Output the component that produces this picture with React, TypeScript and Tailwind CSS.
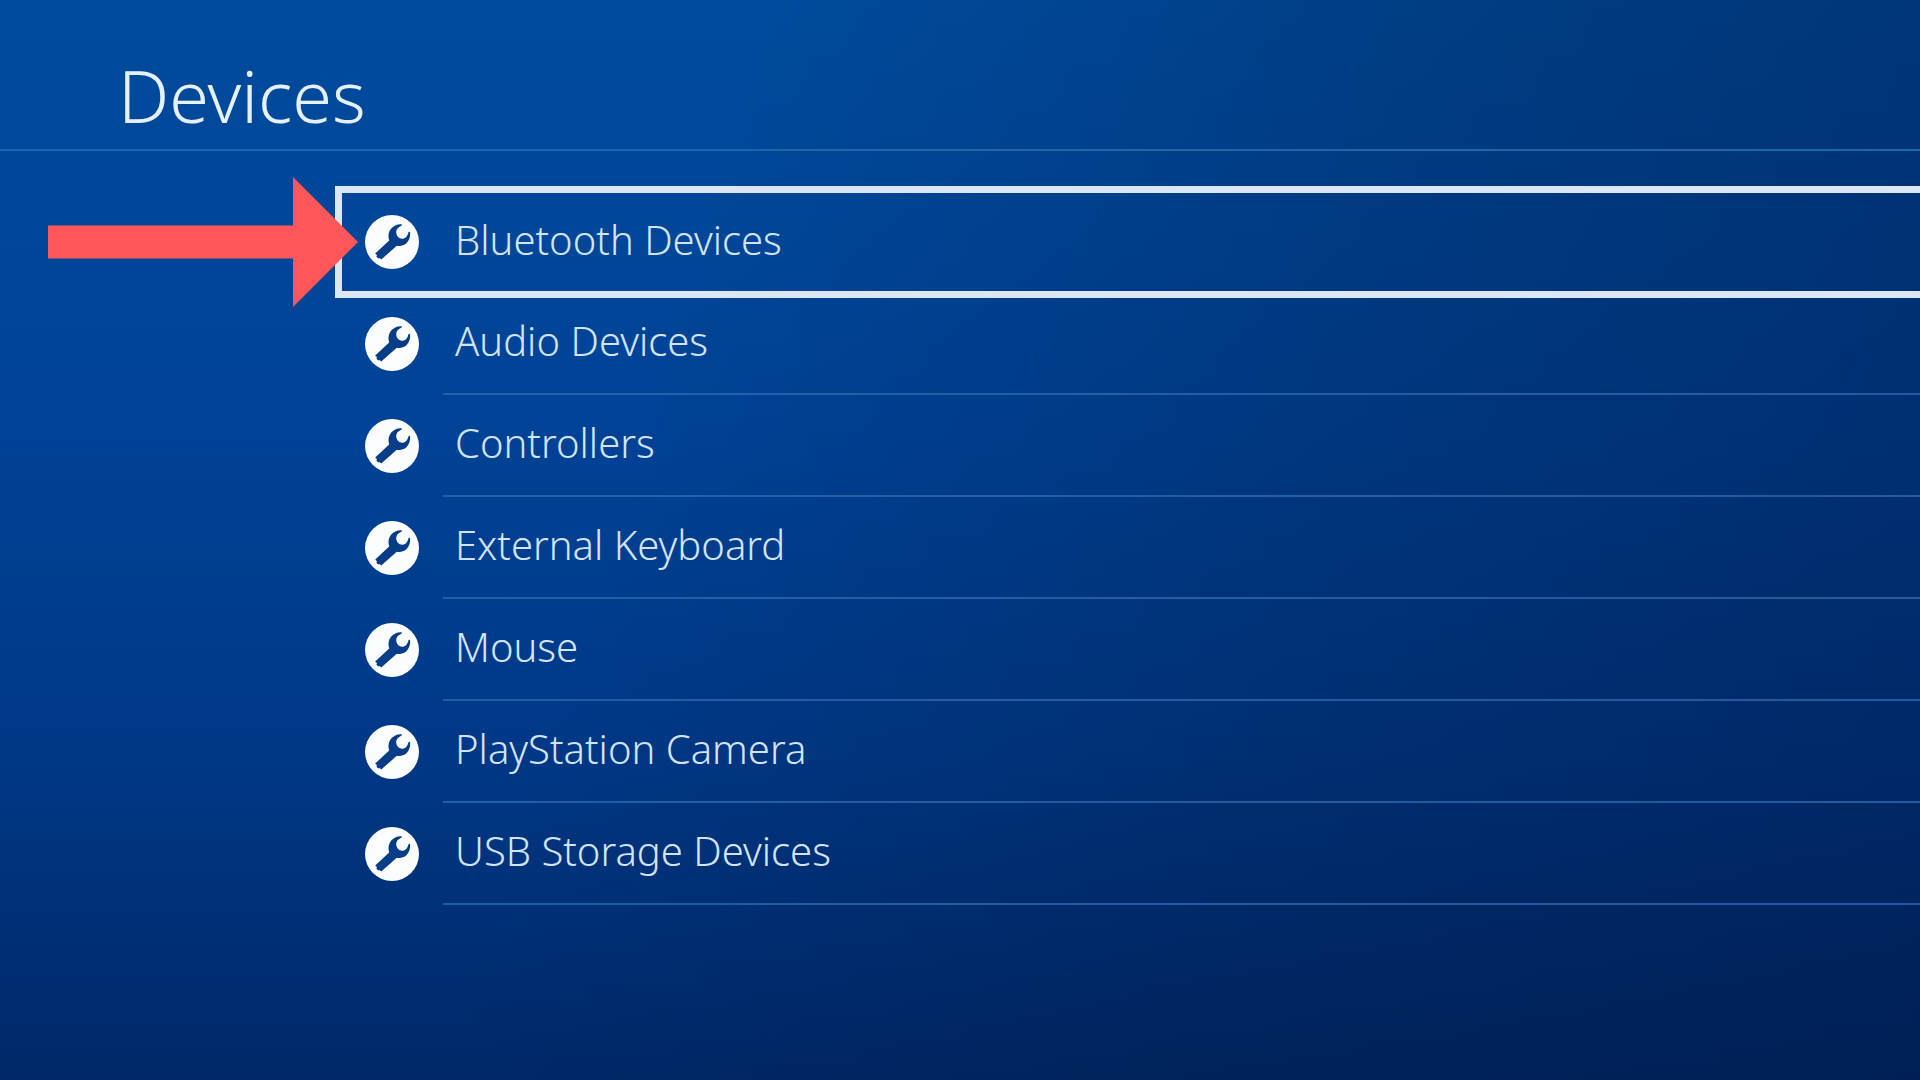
import React from 'react';

interface Device {
  id: string;
  label: string;
}

const devices: Device[] = [
  { id: 'bluetooth', label: 'Bluetooth Devices' },
  { id: 'audio', label: 'Audio Devices' },
  { id: 'controllers', label: 'Controllers' },
  { id: 'keyboard', label: 'External Keyboard' },
  { id: 'mouse', label: 'Mouse' },
  { id: 'camera', label: 'PlayStation Camera' },
  { id: 'usb', label: 'USB Storage Devices' },
];

const WrenchIcon: React.FC = () => (
  <svg viewBox="0 0 54 54" className="h-[54px] w-[54px] shrink-0" aria-hidden="true">
    <circle cx="27" cy="27" r="27" fill="#fbfdff" />
    <path
      d="M10.2 38.4 L24.2 25.4 C22.8 21.2 23.4 17.2 26 13.8 C28.6 10.4 32.6 8.8 37 9.2 L36.4 10.8 C32.8 12.2 31 14.6 31.2 17.6 C31.6 21.8 35 24.6 38.6 23.6 C41.4 22.8 42.8 20.4 43.6 17 L45 16.8 C45.6 21.2 44.4 25.4 41.4 28.2 C38.8 30.6 35.4 31.4 31.8 30.8 L16.2 44.6 L14.6 43 L13.4 43.6 L11.4 41.8 L12 40.2 Z"
      fill="#063d86"
    />
  </svg>
);

const PointerArrow: React.FC = () => (
  <svg
    viewBox="0 0 310 130"
    className="pointer-events-none absolute top-1/2 -left-[287px] h-[130px] w-[310px] -translate-y-1/2"
    aria-hidden="true"
  >
    <path d="M0 48.5 H245 V0 L310 65 L245 130 V81.5 H0 Z" fill="#ff5757" />
  </svg>
);

const DeviceRow: React.FC<{ device: Device; selected: boolean }> = ({ device, selected }) => (
  <li className="relative">
    {selected ? (
      <button
        type="button"
        aria-current="true"
        className="-my-[5px] flex h-[112px] w-full items-center border-y-[7px] border-l-[7px] border-[#dbe6f6] pl-[23px] text-left"
      >
        <WrenchIcon />
        <span className="pb-1 pl-9">{device.label}</span>
      </button>
    ) : (
      <button type="button" className="flex h-[102px] w-full items-center pl-[30px] text-left">
        <WrenchIcon />
        <span className="ml-6 flex flex-1 items-center self-stretch border-b-2 border-[#2a6db0]/75 pb-1 pl-3">
          {device.label}
        </span>
      </button>
    )}
    {selected && <PointerArrow />}
  </li>
);

export default function App() {
  return (
    <div className="min-h-screen overflow-hidden bg-[linear-gradient(108deg,rgba(0,22,62,0)_34%,rgba(0,22,62,0.28)_66%,rgba(0,22,66,0.42)_88%,rgba(0,20,64,0.46)_100%),linear-gradient(to_bottom,#004b9c_0%,#004296_40%,#003886_70%,#002868_100%)] font-['Noto_Sans',sans-serif] font-light">
      <header className="flex h-[151px] items-end border-b-2 border-[#1f68a8] pl-[118px]">
        <h1 className="pb-[10px] text-[72px] leading-[88px] text-[#e6f1ff]">Devices</h1>
      </header>
      <main className="pt-10 pl-[335px]">
        <ul className="text-[40px] leading-[48px] text-[#d2e4fb]">
          {devices.map((device) => (
            <DeviceRow key={device.id} device={device} selected={device.id === 'bluetooth'} />
          ))}
        </ul>
      </main>
    </div>
  );
}
